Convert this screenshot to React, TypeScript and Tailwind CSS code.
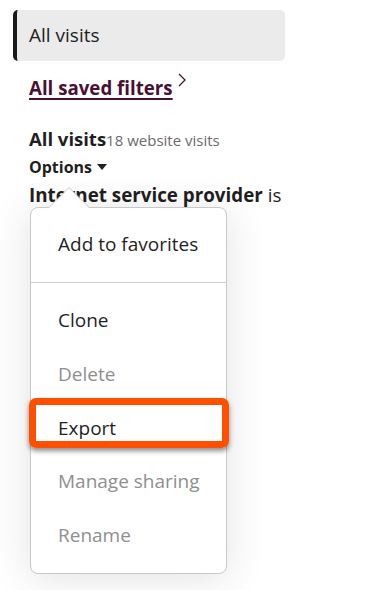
import React from "react";

const font = { fontFamily: '"Open Sans", "Liberation Sans", sans-serif' };

type Item = { label: string; muted?: boolean; highlight?: boolean };

const topItems: Item[] = [{ label: "Add to favorites" }];
const actionItems: Item[] = [
  { label: "Clone" },
  { label: "Delete", muted: true },
  { label: "Export", highlight: true },
  { label: "Manage sharing", muted: true },
  { label: "Rename", muted: true },
];

function MenuItem({ item }: { item: Item }) {
  return (
    <li className="relative flex h-[53.75px] items-center pl-[27px]">
      {item.highlight && (
        <span
          aria-hidden
          className="absolute left-[-2px] right-[-3px] top-[-3px] bottom-[7px] rounded-[7px] border-[7px] border-[#ff4f00] shadow-[0_3px_5px_rgba(0,0,0,0.45)]"
        />
      )}
      <span
        className={
          "relative text-[19px] leading-none " + (item.muted ? "text-[#8f8f8f]" : "text-[#1f1f1f]")
        }
      >
        {item.label}
      </span>
    </li>
  );
}

export default function App() {
  return (
    <div style={font} className="relative h-[590px] w-[392px] overflow-hidden bg-white">
      <div className="pl-[13px] pt-[10px]">
        <div className="flex h-[51px] w-[272px] items-center rounded-[5px] border-l-4 border-[#1a1a1a] bg-[#ebebeb] pl-3 text-[19px] text-[#222]">
          All visits
        </div>
      </div>

      <div className="mt-[13px] flex items-start pl-[29px]">
        <a className="text-[18.7px] font-bold text-[#4b0f33] underline underline-offset-[3px] decoration-[1.5px]">
          All saved filters
        </a>
        <svg width="12" height="16" viewBox="0 0 12 16" className="ml-[3px] mt-[-2px]">
          <path d="M3 2 L9 8 L3 14" fill="none" stroke="#4b0f33" strokeWidth="1.3" />
        </svg>
      </div>

      <div className="mt-[25px] pl-[29px] text-[#1f1f1f]">
        <div className="flex items-baseline leading-[24px]">
          <span className="text-[18.5px] font-bold">All visits</span>
          <span className="text-[15px] text-[#6b6b6b]">18 website visits</span>
        </div>
        <div className="mt-[4px] flex items-center gap-[5px] text-[16px] font-bold leading-[22px]">
          Options
          <svg width="10" height="6" viewBox="0 0 10 6">
            <path d="M0 0 L10 0 L5 6 Z" fill="#1f1f1f" />
          </svg>
        </div>
        <div className="mt-[5px] text-[18.8px] leading-[24px]">
          <span className="font-bold">Internet service provider</span> is
        </div>
      </div>

      <div className="absolute left-[30px] top-[207px] w-[197px] rounded-[8px] border border-[#c8c8c8] bg-white shadow-[0_4px_40px_rgba(0,0,0,0.12)]">
        <div className="absolute left-[17px] top-[-21px] h-[21px] w-[42px] overflow-hidden">
          <svg width="42" height="22" viewBox="0 0 42 22">
            <path d="M0 21.5 L21 0.5 L42 21.5" fill="white" stroke="#c8c8c8" strokeWidth="1" />
          </svg>
        </div>
        <ul className="border-b border-[#cfcfcf] pb-[10px] pt-[10px]">
          {topItems.map((it) => (
            <MenuItem key={it.label} item={it} />
          ))}
        </ul>
        <ul className="pb-[10px] pt-[11px]">
          {actionItems.map((it) => (
            <MenuItem key={it.label} item={it} />
          ))}
        </ul>
      </div>
    </div>
  );
}
